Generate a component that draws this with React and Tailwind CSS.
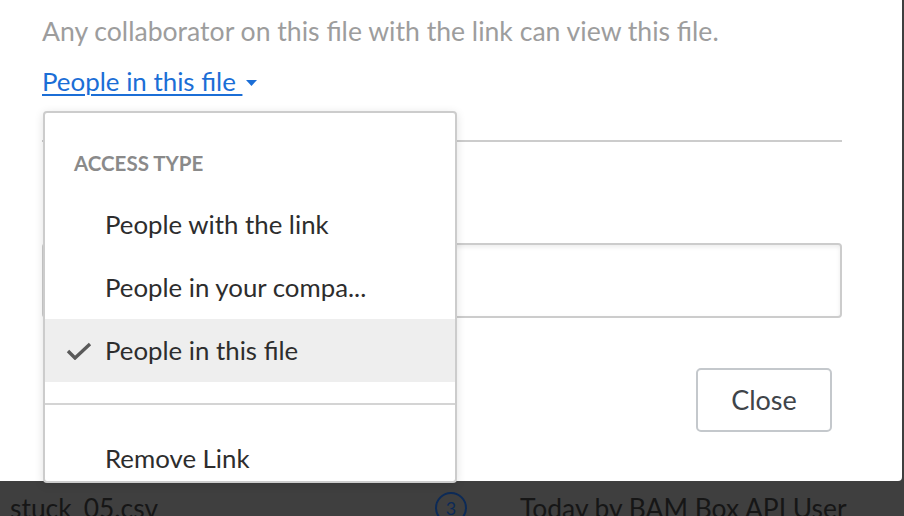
import { useState } from 'react';

const FONT = { fontFamily: 'Lato, "Open Sans", sans-serif' };

const options = [
  { id: 'open', label: 'People with the link' },
  { id: 'company', label: 'People in your compa...' },
  { id: 'collab', label: 'People in this file' },
];

function Check() {
  return (
    <svg width="26" height="18" viewBox="0 0 26 18" fill="none">
      <polyline points="2,9 9,16 24,2" stroke="#5a5a5a" strokeWidth="3.4" strokeLinecap="butt" strokeLinejoin="miter" />
    </svg>
  );
}

function AccessMenu({ value, onPick }) {
  return (
    <div className="absolute left-[43px] top-[111px] w-[414px] h-[372px] overflow-hidden bg-white border-2 border-[#cccccc] rounded-[4px] shadow-[0_2px_10px_rgba(0,0,0,0.12)] z-10">
      <div className="h-[80px] pl-[29px] pt-[38px] text-[20.5px] leading-[24px] font-bold uppercase text-[#8a8a8a]">
        Access type
      </div>
      {options.map(o => (
        <button
          key={o.id}
          onClick={() => onPick(o.id)}
          className={`w-full h-[63px] flex items-center text-left text-[25.8px] text-[#2d2d2d] ${value === o.id ? 'bg-[#eeeeee]' : ''}`}
        >
          <span className="w-[60px] pl-[21px] flex items-center">
            {value === o.id && <Check />}
          </span>
          {o.label}
        </button>
      ))}
      <div className="h-[21px]" />
      <div className="h-[2px] bg-[#d4d4d4]" />
      <div className="pt-[21px]">
        <button className="w-full h-[64px] flex items-center pl-[60px] text-left text-[25.8px] text-[#2d2d2d]">
          Remove Link
        </button>
      </div>
    </div>
  );
}

export default function App() {
  const [access, setAccess] = useState('collab');

  return (
    <div className="w-[904px] h-[516px] bg-[#3f3f3f] relative overflow-hidden" style={FONT}>
      {/* modal */}
      <div className="w-[902px] h-[481px] bg-white rounded-br-[4px] px-[42px] pt-[16px]">
        <p className="text-[26.6px] leading-[30px] text-[#9d9d9d] whitespace-nowrap">
          Any collaborator on this file with the link can view this file.
        </p>
        <div className="mt-[20px] h-[30px] flex items-center">
          <a href="#" className="text-[25.9px] leading-[30px] text-[#1b6ed6] underline underline-offset-[3px] decoration-[1.5px]">
            People in this file&nbsp;
          </a>
          <svg width="11" height="6" viewBox="0 0 11 6" className="ml-[4px] mt-[3px]">
            <polygon points="0,0 11,0 5.5,6" fill="#1b6ed6" />
          </svg>
        </div>
        <div className="mt-[44px] h-[2px] w-[800px] bg-[#cccccc]" />
        <div className="mt-[101px] h-[75px] w-[800px] border-2 border-[#cccccc] rounded-[4px] shadow-[inset_0_2px_4px_rgba(0,0,0,0.08)]" />
        <div className="mt-[50px] w-[790px] flex justify-end">
          <button className="w-[136px] h-[64px] border-2 border-[#c4c8cc] rounded-[5px] text-[27px] text-[#3f4449] bg-white">
            Close
          </button>
        </div>
      </div>

      {/* file list row behind overlay */}
      <div className="flex items-start pt-[11px] text-[26.4px] leading-[32px] text-[#161616] whitespace-nowrap">
        <span className="w-[435px] pl-[10px]">stuck_05.csv</span>
        <span className="w-[32px] h-[32px] rounded-full border-2 border-[#0c2a57] flex items-center justify-center text-[18px] text-[#0c2a57]">
          3
        </span>
        <span className="ml-[53px]">Today by BAM Box API User</span>
      </div>

      <AccessMenu value={access} onPick={setAccess} />
    </div>
  );
}
